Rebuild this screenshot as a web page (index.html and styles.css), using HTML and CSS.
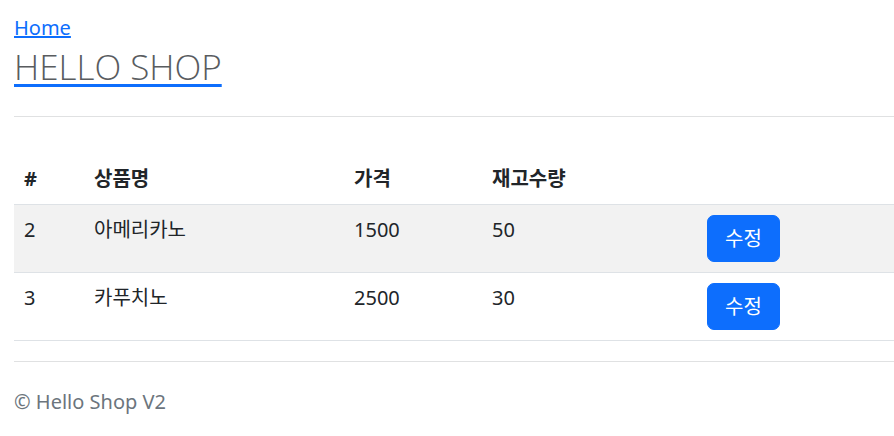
FILE: index.html
```html
<!DOCTYPE html>
<html lang="ko">
<head>
<meta charset="utf-8">
<title>HELLO SHOP</title>
<link rel="stylesheet" href="styles.css">
</head>
<body>
<div class="page">
  <header class="site-header">
    <div class="home-row"><a class="home-link" href="#">Home</a></div>
    <h1 class="title"><a class="title-link" href="#">HELLO SHOP</a></h1>
  </header>
  <hr class="divider">
  <table class="items">
    <thead>
      <tr>
        <th class="col-id">#</th>
        <th class="col-name">상품명</th>
        <th class="col-price">가격</th>
        <th class="col-qty">재고수량</th>
        <th class="col-act"></th>
      </tr>
    </thead>
    <tbody>
      <tr class="striped">
        <td>2</td>
        <td>아메리카노</td>
        <td>1500</td>
        <td>50</td>
        <td><a class="btn" href="#">수정</a></td>
      </tr>
      <tr>
        <td>3</td>
        <td>카푸치노</td>
        <td>2500</td>
        <td>30</td>
        <td><a class="btn" href="#">수정</a></td>
      </tr>
    </tbody>
  </table>
  <footer class="site-footer">
    <p class="copy">© Hello Shop V2</p>
  </footer>
</div>
</body>
</html>
```

FILE: styles.css
```css
html, body {
  margin: 0;
  padding: 0;
  background: #fff;
}
body {
  font-family: "Noto Sans", "Noto Sans CJK KR", sans-serif;
  font-size: 20px;
  line-height: 1.5;
  color: #212529;
  overflow: hidden;
}
.page {
  padding: 13px 0 0 14px;
}
.home-row {
  height: 30px;
}
.home-link {
  color: #0d6efd;
  text-decoration: underline;
}
.title {
  margin: 3px 0 28px;
  font-family: "Open Sans", "Noto Sans CJK KR", sans-serif;
  font-weight: 300;
  font-size: 35px;
  line-height: 42px;
}
.title-link {
  color: #595c5f;
  text-decoration: underline;
  text-decoration-color: #0d6efd;
  text-decoration-thickness: 3px;
  text-underline-offset: 4px;
}
.divider {
  margin: 0 0 37px;
  border: 0;
  border-top: 1px solid #e0e1e2;
  height: 0;
}
.items {
  width: 100%;
  border-collapse: collapse;
  margin-bottom: 20px;
}
.items th,
.items td {
  padding: 10px;
  text-align: left;
  vertical-align: top;
  border-bottom: 1px solid #dee2e6;
  height: 30px;
}
.items th {
  font-weight: 700;
}
.col-id { width: 50px; }
.col-name { width: 240px; }
.col-price { width: 118px; }
.col-qty { width: 195px; }
.striped td {
  background: #f2f2f2;
}
.btn {
  display: inline-block;
  padding: 7.5px 17px;
  border: 1px solid #0d6efd;
  border-radius: 7px;
  background: #0d6efd;
  color: #fff;
  text-decoration: none;
  font-size: 20px;
  line-height: 30px;
}
.site-footer {
  border-top: 1px solid #e0e1e2;
  padding-top: 25px;
}
.copy {
  margin: 0;
  color: #6c757d;
}
```
